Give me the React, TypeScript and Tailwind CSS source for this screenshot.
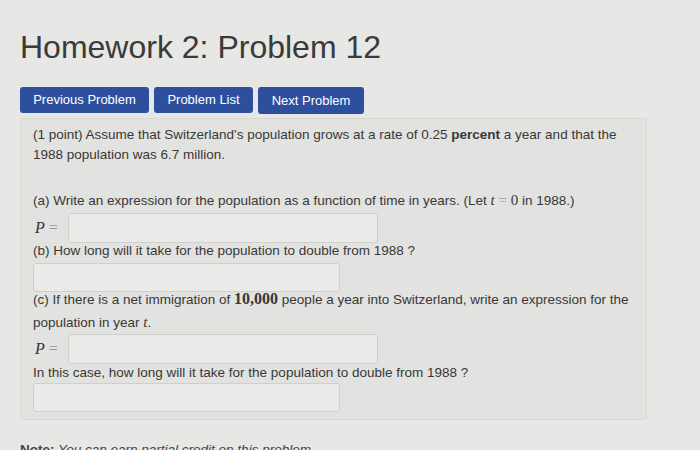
import React from 'react';

const serif = "font-['Liberation_Serif','DejaVu_Serif',serif]";

function AnswerBox({ wide }: { wide?: boolean }) {
  return (
    <div
      className={
        wide
          ? 'h-[30px] w-[310px] rounded-[3px] border border-[#cfcfcc] bg-[#eaeae8]'
          : 'h-[29px] w-[307px] rounded-[3px] border border-[#cfcfcc] bg-[#eaeae8]'
      }
    />
  );
}

function PEquals() {
  return (
    <div className="flex items-center gap-[6px]">
      <span className={`${serif} w-[29px] pl-[2px] text-[16px] text-[#333]`}>
        <i>P</i>
        <span className="text-[#999]"> =</span>
      </span>
      <AnswerBox wide />
    </div>
  );
}

export default function App() {
  return (
    <div className="h-[450px] w-[700px] overflow-hidden bg-[#e7e7e5] font-['Liberation_Sans',Arial,sans-serif] text-[#383838]">
      <div className="pl-[20px] pt-[28px]">
        <h1 className="text-[32px] leading-[38px] text-[#3a3a3a]">Homework 2: Problem 12</h1>

        <div className="mt-[21px] flex gap-[5px] text-[13px] text-white">
          <div className="flex h-[26px] w-[129px] items-center justify-center rounded-[3px] bg-[#2e4f9e]">Previous Problem</div>
          <div className="flex h-[26px] w-[99px] items-center justify-center rounded-[3px] bg-[#2e4f9e]">Problem List</div>
          <div className="flex h-[27px] w-[106px] items-center justify-center rounded-[3px] bg-[#2e4f9e]">Next Problem</div>
        </div>

        <div className="mt-[4px] w-[627px] rounded-[3px] border border-[#d8d8d5] bg-[#e2e2e0] pb-[7px] pl-[12px] pr-[6px] pt-[6px] text-[13.5px] leading-[20px]">
          <p>
            (1 point) Assume that Switzerland's population grows at a rate of 0.25 <b>percent</b> a year and that the
            <br />
            1988 population was 6.7 million.
          </p>

          <p className="mt-[25px]">
            (a) Write an expression for the population as a function of time in years. (Let{' '}
            <span className={`${serif} text-[15px]`}>
              <i>t</i> <span className="text-[#999]">=</span> 0
            </span>{' '}
            in 1988.)
          </p>
          <div className="mt-[2px]">
            <PEquals />
          </div>

          <p className="mt-[-2px]">(b) How long will it take for the population to double from 1988 ?</p>
          <div className="mt-[2px]">
            <AnswerBox />
          </div>

          <p className="mt-[-4px] leading-[22px]">
            (c) If there is a net immigration of{' '}
            <span className={`${serif} text-[16px] font-bold`}>10,000</span> people a year into Switzerland, write an expression for the
            <br />
            population in year <span className={`${serif} text-[15px] italic`}>t</span>.
          </p>
          <div className="mt-[0px]">
            <PEquals />
          </div>

          <p className="mt-[-1px]">In this case, how long will it take for the population to double from 1988 ?</p>
          <div className="mt-[0px]">
            <AnswerBox />
          </div>
        </div>

        <p className="mt-[20px] text-[13.5px] italic text-[#444]">
          <b className="not-italic">Note:</b> You can earn partial credit on this problem.
        </p>
      </div>
    </div>
  );
}
